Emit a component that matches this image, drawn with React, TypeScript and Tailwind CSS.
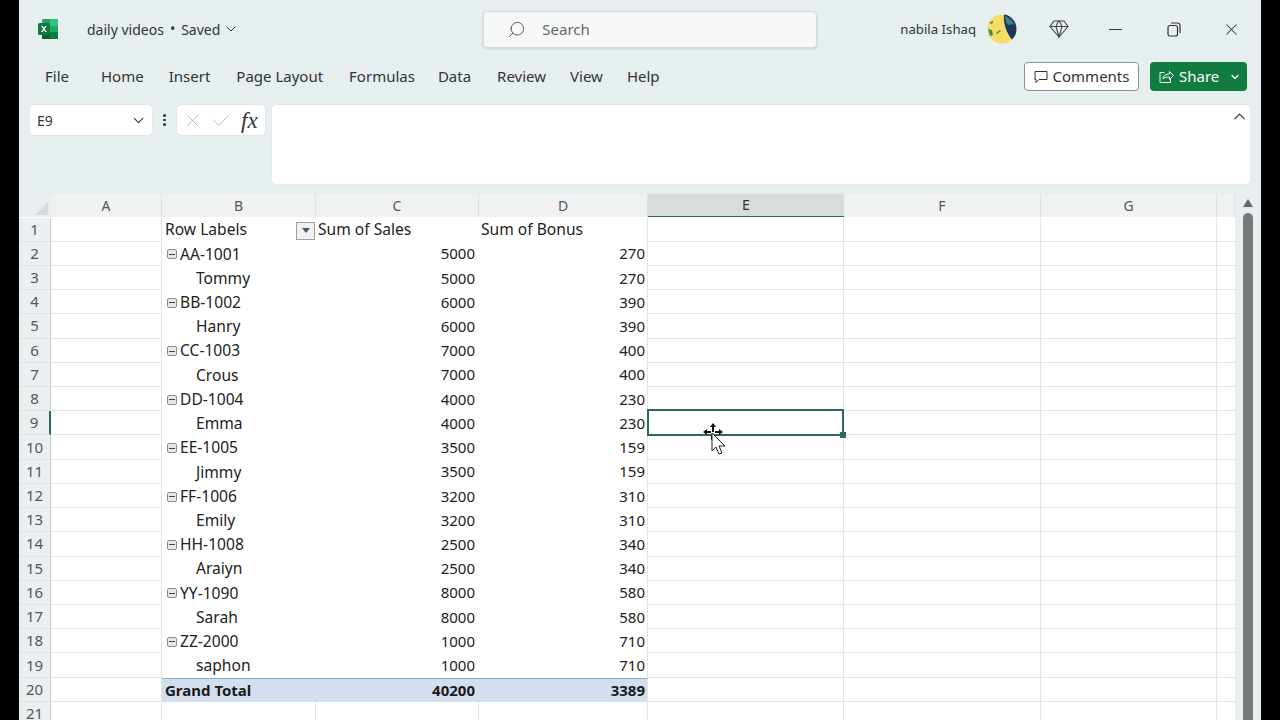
import { Check, ChevronDown, ChevronUp, Search, X } from "lucide-react";

const font = "[font-family:'Noto_Sans','Open_Sans',sans-serif]";

type Row = { label?: string; kind?: "head" | "group" | "item" | "total"; sales?: string; bonus?: string };

const rows: Row[] = [
  { label: "Row Labels", kind: "head", sales: "Sum of Sales", bonus: "Sum of Bonus" },
  { label: "AA-1001", kind: "group", sales: "5000", bonus: "270" },
  { label: "Tommy", kind: "item", sales: "5000", bonus: "270" },
  { label: "BB-1002", kind: "group", sales: "6000", bonus: "390" },
  { label: "Hanry", kind: "item", sales: "6000", bonus: "390" },
  { label: "CC-1003", kind: "group", sales: "7000", bonus: "400" },
  { label: "Crous", kind: "item", sales: "7000", bonus: "400" },
  { label: "DD-1004", kind: "group", sales: "4000", bonus: "230" },
  { label: "Emma", kind: "item", sales: "4000", bonus: "230" },
  { label: "EE-1005", kind: "group", sales: "3500", bonus: "159" },
  { label: "Jimmy", kind: "item", sales: "3500", bonus: "159" },
  { label: "FF-1006", kind: "group", sales: "3200", bonus: "310" },
  { label: "Emily", kind: "item", sales: "3200", bonus: "310" },
  { label: "HH-1008", kind: "group", sales: "2500", bonus: "340" },
  { label: "Araiyn", kind: "item", sales: "2500", bonus: "340" },
  { label: "YY-1090", kind: "group", sales: "8000", bonus: "580" },
  { label: "Sarah", kind: "item", sales: "8000", bonus: "580" },
  { label: "ZZ-2000", kind: "group", sales: "1000", bonus: "710" },
  { label: "saphon", kind: "item", sales: "1000", bonus: "710" },
  { label: "Grand Total", kind: "total", sales: "40200", bonus: "3389" },
  {},
];

const menu = [
  { name: "File", cls: "ml-[26px]" },
  { name: "Home", cls: "ml-[32px]" },
  { name: "Insert", cls: "ml-[25px]" },
  { name: "Page Layout", cls: "ml-[26px]" },
  { name: "Formulas", cls: "ml-[26px]" },
  { name: "Data", cls: "ml-[23px]" },
  { name: "Review", cls: "ml-[26px]" },
  { name: "View", cls: "ml-[24px]" },
  { name: "Help", cls: "ml-[24px]" },
];

const cols = "grid grid-cols-[32px_111px_154px_163px_169px_196px_197px_176px_18px]";

function ExcelLogo() {
  return (
    <svg width="20" height="20" viewBox="0 0 20 20">
      <rect x="4" y="0" width="16" height="20" rx="1.5" fill="#21a366" />
      <rect x="12" y="0" width="8" height="7" fill="#33c481" />
      <rect x="12" y="13" width="8" height="7" fill="#107c41" />
      <rect x="4" y="13" width="8" height="7" fill="#185c37" />
      <rect x="0" y="4" width="12" height="12" rx="1.5" fill="#0f7b43" />
      <path d="M3.2 7l2 3-2.2 3h1.600l1.300-2 1.300 2h1.600l-2.200-3 2-3H7l-1.100 1.900L4.800 7z" fill="#fff" />
    </svg>
  );
}

function Avatar() {
  return (
    <svg width="30" height="30" viewBox="0 0 30 30">
      <circle cx="15" cy="15" r="14.5" fill="#f5dc63" />
      <path d="M17 .6a14.500 14.500 0 0 1 12.500 14.400A14.500 14.500 0 0 1 25 25.500C20 20 16 10 17 .6z" fill="#1c3560" />
      <path d="M18 2c3 1 7 4 9 8l-6 1c-2-2-3-5-3-9z" fill="#3e7f8c" />
      <path d="M1 15l4 1 1 5-3 1zM9 19l4-3 1 1-4 3z" fill="#3d8f56" />
      <path d="M3 8l3-1 0 2-3 1z" fill="#6c7a3a" />
    </svg>
  );
}

function Diamond() {
  return (
    <svg width="20" height="20" viewBox="0 0 20 20" fill="none" stroke="#444" strokeWidth="1.1">
      <path d="M5 2h10l4 5.500L10 18 1 7.500z" />
      <path d="M1 7.500h18M7 7.500L10 18l3-10.500L10.500 2h-1z" />
    </svg>
  );
}

function Restore() {
  return (
    <svg width="14" height="15" viewBox="0 0 14 15" fill="none" stroke="#333" strokeWidth="1.2">
      <rect x="1" y="3.5" width="9.5" height="10.5" rx="2" />
      <path d="M4 1h6.500A2.500 2.500 0 0 1 13 3.500V11" />
    </svg>
  );
}

function ShareIcon() {
  return (
    <svg width="15" height="15" viewBox="0 0 15 15" fill="none" stroke="#fff" strokeWidth="1">
      <path d="M5.500 3.500H1v10h10.500V9" />
      <path d="M4 10c0-3.500 3-5 6.500-5V2.500l4 4-4 4V8C8 8 5.500 8 4 10z" />
    </svg>
  );
}

function CommentIcon() {
  return (
    <svg width="14" height="14" viewBox="0 0 14 14" fill="none" stroke="#333" strokeWidth="1">
      <path d="M1 1.500h12v8H5l-3 3v-3H1z" />
    </svg>
  );
}

function MoveCursor() {
  return (
    <svg width="26" height="36" viewBox="0 0 26 36" className="absolute left-[53px] top-[12px]">
      <path d="M11 0l3 4h-2v5h-2V4H8zM1 9l4-3v2h4v2H5v2zM21 9l-4-3v2h-4v2h4v2zM9 13h2v3l-1 2-1-2z" fill="#111" />
      <path d="M10 10v18l4-4 3 7 3-1-3-7h6z" fill="#fff" stroke="#222" strokeWidth="1" />
    </svg>
  );
}

function Collapse() {
  return (
    <span className="ml-[5px] mr-[3px] flex h-[10px] w-[10px] items-center justify-center rounded-[2px] border border-[#8a8f94] bg-[#e4e8ea]">
      <span className="h-[1px] w-[6px] bg-[#444]" />
    </span>
  );
}

function SheetRow({ row, index }: { row: Row; index: number }) {
  const num = index + 1;
  const selected = num === 9;
  const line = "border-b border-b-[#e3e5e5]";
  const pivot = !!row.kind;
  const total = row.kind === "total";
  const text = total ? "font-bold text-[#1a1a1a]" : "text-[#222]";
  const fill = total ? "bg-[#d5deee] border-t border-t-[#8ea9cf]" : "";
  const labelSize = total ? "" : "text-[15.6px]";

  return (
    <div className={`${cols} h-[24.22px] text-[15px] leading-none`}>
      <div
        className={`flex items-center justify-center border-b border-b-[#dfe4e5] bg-[#eaf0f2] text-[#555] ${
          selected ? "border-r-[2px] border-r-[#2f6b50] bg-[#d9dddd]" : "border-r border-r-[#c8cccc]"
        }`}
      >
        {num}
      </div>
      <div className={`border-r border-r-[#e3e5e5] ${line}`} />
      <div className={`relative flex items-center pt-[1px] ${fill} ${pivot ? "" : `border-r border-r-[#e3e5e5] ${line}`} ${text} ${labelSize}`}>
        {row.kind === "head" && <span className="pl-[3px]">{row.label}</span>}
        {row.kind === "head" && (
          <span className="absolute right-[1px] top-[4px] flex h-[18px] w-[19px] items-center justify-center border border-[#9aa0a0] bg-[#f0f2f2]">
            <span className="h-0 w-0 border-x-[4px] border-t-[5px] border-x-transparent border-t-[#555]" />
          </span>
        )}
        {row.kind === "group" && <Collapse />}
        {row.kind === "group" && <span>{row.label}</span>}
        {row.kind === "item" && <span className="pl-[34px]">{row.label}</span>}
        {total && <span className="pl-[3px]">{row.label}</span>}
      </div>
      <div
        className={`flex items-center ${fill} ${pivot ? "" : `border-r border-r-[#e3e5e5] ${line}`} ${text} ${
          row.kind === "head" ? "pl-[2px] text-[15.6px]" : "justify-end pr-[4px]"
        }`}
      >
        {row.sales}
      </div>
      <div
        className={`flex items-center border-r border-r-[#e3e5e5] ${fill} ${pivot ? "" : line} ${text} ${
          row.kind === "head" ? "pl-[2px] text-[15.6px]" : "justify-end pr-[2px]"
        }`}
      >
        {row.bonus}
      </div>
      <div className={`relative border-r border-r-[#e3e5e5] ${line}`}>
        {selected && (
          <div className="absolute -left-[1px] -right-[1px] -top-[2px] bottom-[-2px] z-10 border-2 border-[#2f6b50]">
            <span className="absolute -bottom-[4px] -right-[4px] h-[6px] w-[6px] bg-[#2f6b50]" />
            <MoveCursor />
          </div>
        )}
      </div>
      <div className={`border-r border-r-[#e3e5e5] ${line}`} />
      <div className={`border-r border-r-[#e3e5e5] ${line}`} />
      <div className={line} />
    </div>
  );
}

export default function App() {
  return (
    <div className={`relative flex h-[720px] w-[1280px] overflow-hidden bg-black ${font}`}>
      <div className="ml-[19px] flex h-full w-[1242px] flex-col bg-[#e6eef0] text-[#333]">
        {/* title bar */}
        <div className="flex h-[58px] items-center pl-[19px]">
          <ExcelLogo />
          <span className="ml-[29px] text-[14px]">daily videos</span>
          <span className="mx-[6px] text-[14px] leading-none">•</span>
          <span className="text-[14px]">Saved</span>
          <ChevronDown size={16} strokeWidth={1.5} className="ml-[3px]" />
          <div className="ml-[244px] flex h-[37px] w-[334px] items-center rounded-[4px] border border-[#d5d8d9] bg-[#f6f8f8] pl-[23px] shadow-sm">
            <Search size={19} strokeWidth={1.2} className="-scale-x-100 text-[#555]" />
            <span className="ml-[16px] text-[15px] text-[#666]">Search</span>
          </div>
          <span className="ml-[83px] w-[76px] whitespace-nowrap pt-[2px] text-[13.2px]">nabila Ishaq</span>
          <span className="ml-[11px]">
            <Avatar />
          </span>
          <span className="ml-[32px]">
            <Diamond />
          </span>
          <span className="ml-[40px] h-[1px] w-[13px] bg-[#333]" />
          <span className="ml-[45px]">
            <Restore />
          </span>
          <X size={19} strokeWidth={1.3} className="ml-[41px]" />
        </div>

        {/* menu */}
        <div className="flex h-[37px] items-center text-[15px]">
          {menu.map((m) => (
            <span key={m.name} className={m.cls}>
              {m.name}
            </span>
          ))}
          <div className="ml-auto flex items-center gap-[11px] pr-[14px]">
            <div className="flex h-[29px] w-[115px] items-center justify-center gap-[5px] rounded-[4px] border border-[#8c9092] bg-white">
              <CommentIcon />
              Comments
            </div>
            <div className="flex h-[29px] w-[97px] items-center rounded-[4px] bg-[#107c41] pl-[9px] text-white">
              <ShareIcon />
              <span className="ml-[5px]">Share</span>
              <ChevronDown size={12} strokeWidth={2.5} className="ml-[10px]" />
            </div>
          </div>
        </div>

        {/* formula bar */}
        <div className="mt-[10px] flex h-[79px] items-start">
          <div className="ml-[11px] flex h-[30px] w-[122px] items-center justify-between rounded-[4px] bg-white pl-[7px] pr-[5px] text-[14px] shadow-[0_0_1px_#b8c0c2]">
            E9
            <ChevronDown size={17} strokeWidth={1.5} />
          </div>
          <div className="flex h-[30px] w-[25px] flex-col items-center justify-center gap-[2px]">
            <span className="h-[2.5px] w-[2.5px] rounded-full bg-[#333]" />
            <span className="h-[2.5px] w-[2.5px] rounded-full bg-[#333]" />
            <span className="h-[2.5px] w-[2.5px] rounded-full bg-[#333]" />
          </div>
          <div className="flex h-[30px] w-[88px] items-center rounded-[4px] bg-white pl-[5px] shadow-[0_0_1px_#b8c0c2]">
            <X size={21} strokeWidth={1} className="text-[#b4b8ba]" />
            <Check size={23} strokeWidth={1} className="ml-[7px] text-[#b4b8ba]" />
            <span className="ml-[8px] font-['Liberation_Serif',serif] text-[23px] italic leading-none text-[#333]">fx</span>
          </div>
          <div className="ml-[7px] flex h-[79px] w-[978px] justify-end rounded-[4px] bg-white pr-[1px] pt-[2px] shadow-[0_0_1px_#b8c0c2]">
            <ChevronUp size={19} strokeWidth={1.5} />
          </div>
        </div>

        {/* sheet */}
        <div className="mt-[10px] flex flex-1 flex-col overflow-hidden">
          <div className={`${cols} h-[23px] bg-[#f0f2f2] text-[14px] text-[#555]`}>
            <div className="flex items-end justify-end border-b border-b-[#c4c8c8] bg-[#e8eef0] pb-[2px] pr-[3px]">
              <span className="h-0 w-0 border-b-[13px] border-l-[13px] border-b-[#d4d9da] border-l-transparent" />
            </div>
            {["A", "B", "C", "D", "E", "F", "G", ""].map((c) => (
              <div
                key={c || "H"}
                className={`flex items-center justify-center pb-[1px] ${
                  c === "E"
                    ? "border-b-[2px] border-b-[#2f6b50] bg-[#d8dcdc] text-[#333]"
                    : "border-b border-b-[#c4c8c8] border-r border-r-[#dfe1e1]"
                }`}
              >
                {c}
              </div>
            ))}
          </div>
          <div className="bg-white pt-[0.5px]">
            {rows.map((row, i) => (
              <SheetRow key={i} row={row} index={i} />
            ))}
          </div>
        </div>
      </div>

      {/* scroll bar */}
      <div className="absolute left-[1235px] top-[194px] flex h-[526px] w-[26px] flex-col items-center bg-[#e6eef0] pr-[1px]">
        <span className="mt-[5px] h-0 w-0 border-x-[5px] border-b-[8px] border-x-transparent border-b-[#666]" />
        <span className="mt-[6px] h-full w-[10px] rounded-t-full bg-[#777]" />
      </div>
    </div>
  );
}
